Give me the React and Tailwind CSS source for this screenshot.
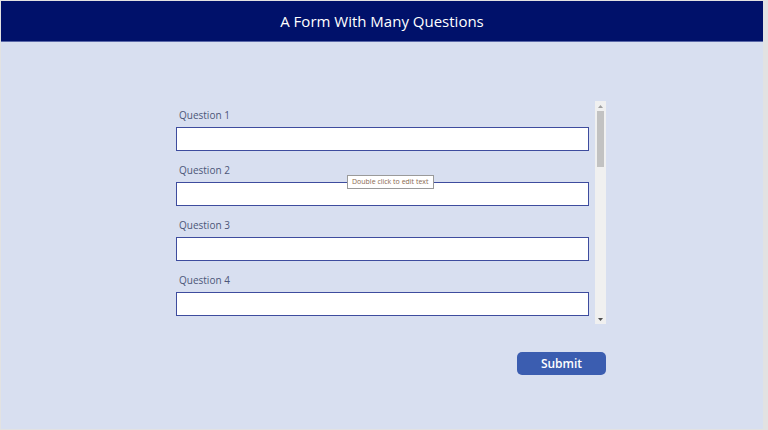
import React from "react";

const questions = ["Question 1", "Question 2", "Question 3", "Question 4"];

export default function App() {
  return (
    <div className="w-[768px] h-[430px] bg-[#e2e2e2] pt-px pl-px pr-[5px] pb-px flex flex-col" style={{ fontFamily: '"Open Sans", "Noto Sans", sans-serif' }}>
      <div className="flex-1 bg-[#d8dff0] flex flex-col">
        <div className="h-[41px] bg-[#00116a] border-b border-[#5a68a8] flex items-center justify-center text-white text-[15px]">
          A Form With Many Questions
        </div>
        <div className="pl-[174px] pt-[59px] flex flex-col w-[605px]">
          <div className="relative w-[431px] h-[223px] flex">
            <div className="flex-1 overflow-hidden pt-[6px] flex flex-col">
              {questions.map((q) => (
                <div key={q} className="flex flex-col pb-[11px]">
                  <div className="h-4 leading-4 pl-1 text-[10px] text-[#4c5678]">{q}</div>
                  <div className="mt-1 ml-px h-6 w-[413px] bg-white border border-[#3e4c9e]" />
                </div>
              ))}
            </div>
            <div className="w-[11px] bg-[#f0f0f0] flex flex-col items-center">
              <div className="h-[10px] flex items-center justify-center">
                <svg width="5" height="3" viewBox="0 0 5 3"><path d="M2.5 0 L5 3 L0 3 Z" fill="#a0a0a0" /></svg>
              </div>
              <div className="w-[7px] h-[56px] bg-[#c2c2c2]" />
              <div className="flex-1" />
              <div className="h-[10px] flex items-center justify-center">
                <svg width="5" height="3" viewBox="0 0 5 3"><path d="M0 0 L5 0 L2.5 3 Z" fill="#505050" /></svg>
              </div>
            </div>
            <div className="absolute left-[172px] top-[74px] h-[14px] px-[4px] bg-white border border-[#9a9a9a] flex items-center text-[7px] text-[#8a6a50] whitespace-nowrap">
              Double click to edit text
            </div>
          </div>
          <div className="w-[431px] flex justify-end mt-[28px]">
            <button className="w-[89px] h-[23px] rounded-[5px] bg-[#3b5db0] text-white text-[12px] font-semibold flex items-center justify-center">
              Submit
            </button>
          </div>
        </div>
      </div>
    </div>
  );
}
